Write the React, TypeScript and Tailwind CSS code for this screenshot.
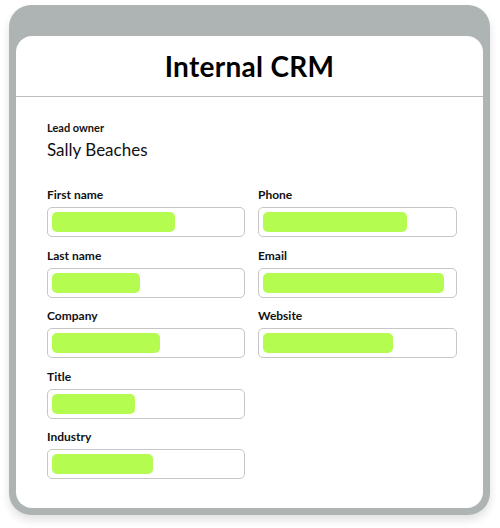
import React from "react";

const Field = (props: { label: string; fill: number }) => {
   return (
      <div className="flex flex-col">
         <div className="h-[14px] text-[12px] leading-[14px] font-bold text-[#111]">
            {props.label}
         </div>
         <div className="mt-[5px] h-[30px] border border-[#c6c6c6] rounded-[5px] p-[4px]">
            <div
               className="h-full bg-[#b4fc4f] rounded-[5px]"
               style={{ width: props.fill }}
            />
         </div>
      </div>
   );
};

const App = () => {
   return (
      <div
         className="w-[500px] h-[528px] bg-white pt-[5px] pl-[9px]"
         style={{ fontFamily: "Lato, 'Open Sans', sans-serif" }}
      >
         <div className="w-[481px] h-[510px] bg-[#aeb4b3] rounded-[22px] pt-[31px] px-[7px] pb-[7px] shadow-[0_5px_8px_rgba(0,0,0,0.12)]">
            <div className="h-full bg-white rounded-[16px] flex flex-col">
               <div className="h-[61px] flex items-center justify-center border-b border-[#b8bebd]">
                  <h1 className="text-[28px] font-bold text-black tracking-[0.3px]">
                     Internal CRM
                  </h1>
               </div>
               <div className="pl-[31px] pr-[26px] pt-[24px]">
                  <div className="text-[11px] leading-[14px] font-bold text-[#111]">
                     Lead owner
                  </div>
                  <div className="mt-[5px] text-[17px] leading-[20px] text-[#111]">
                     Sally Beaches
                  </div>
                  <div className="mt-[28px] grid grid-cols-[198px_199px] gap-x-[13px] gap-y-[11.5px]">
                     <Field label="First name" fill={123} />
                     <Field label="Phone" fill={144} />
                     <Field label="Last name" fill={88} />
                     <Field label="Email" fill={181} />
                     <Field label="Company" fill={108} />
                     <Field label="Website" fill={130} />
                     <Field label="Title" fill={83} />
                     <div />
                     <Field label="Industry" fill={101} />
                  </div>
               </div>
            </div>
         </div>
      </div>
   );
};

export default App;
